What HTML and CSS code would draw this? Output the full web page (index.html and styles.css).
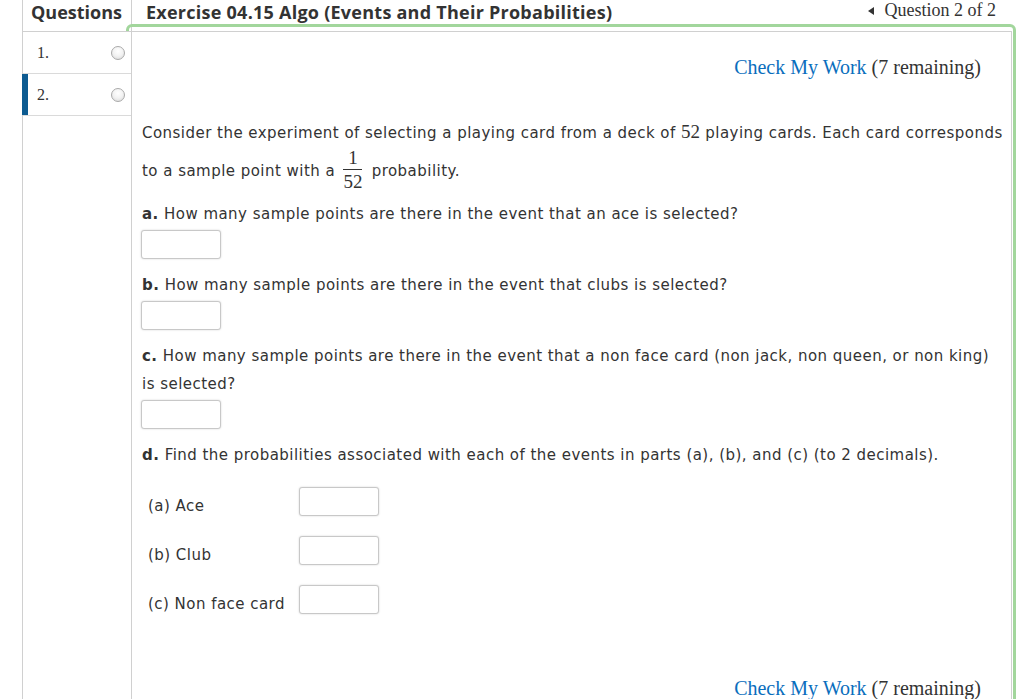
FILE: index.html
```html
<!DOCTYPE html>
<html>
<head>
<meta charset="utf-8">
<link rel="stylesheet" href="styles.css">
</head>
<body>
<div class="app">
  <div class="topbar">
    <div class="qhead">Questions</div>
    <div class="title">Exercise 04.15 Algo (Events and Their Probabilities)</div>
    <div class="qnav"><span class="tri"></span>Question 2 of 2</div>
  </div>
  <div class="focus-ring"></div>
  <div class="main">
    <div class="sidebar">
      <div class="qrow"><span class="num">1.</span><span class="radio"></span></div>
      <div class="qrow active"><span class="num">2.</span><span class="radio"></span></div>
      <div class="filler"></div>
    </div>
    <div class="panel">
      <div class="check"><a class="link">Check My Work</a> (7 remaining)</div>
      <div class="question">
        <p class="intro">Consider the experiment of selecting a playing card from a deck of <span class="math">52</span> playing cards. Each card corresponds</p>
        <p class="intro2">to a sample point with a <span class="frac"><span class="fn">1</span><span class="fd">52</span></span> probability.</p>
        <p class="part"><b>a.</b> How many sample points are there in the event that an ace is selected?</p>
        <div class="field"></div>
        <p class="part"><b>b.</b> How many sample points are there in the event that clubs is selected?</p>
        <div class="field"></div>
        <p class="part"><b>c.</b> How many sample points are there in the event that a non face card (non jack, non queen, or non king)<br>is selected?</p>
        <div class="field"></div>
        <p class="part"><b>d.</b> Find the probabilities associated with each of the events in parts (a), (b), and (c) (to 2 decimals).</p>
        <div class="ptable">
          <div class="prow"><span class="plabel">(a) Ace</span><span class="field small"></span></div>
          <div class="prow"><span class="plabel">(b) Club</span><span class="field small"></span></div>
          <div class="prow"><span class="plabel">(c) Non face card</span><span class="field small"></span></div>
        </div>
      </div>
      <div class="check bottom"><a class="link">Check My Work</a> (7 remaining)</div>
    </div>
  </div>
</div>
</body>
</html>
```
FILE: styles.css
```css
html, body {
  margin: 0;
  padding: 0;
  background: #fff;
  overflow: hidden;
  height: 699px;
}
.app {
  position: relative;
  padding-left: 22px;
  height: 699px;
}
.topbar {
  display: flex;
  align-items: stretch;
  height: 31px;
}
.qhead {
  border-left: 1px solid #d0d0d0;
  border-right: 1px solid #d0d0d0;
  font-family: "Open Sans", sans-serif;
  font-weight: 700;
  font-size: 18px;
  color: #333;
  padding-left: 8px;
  box-sizing: border-box;
  width: 110px;
  line-height: 25px;
}
.title {
  font-family: "Open Sans", sans-serif;
  font-weight: 700;
  font-size: 18px;
  letter-spacing: 0.25px;
  color: #333;
  padding-left: 14px;
  line-height: 25px;
  flex: 1;
}
.qnav {
  font-family: "Liberation Serif", serif;
  font-size: 18px;
  color: #333;
  line-height: 21px;
  padding-right: 28px;
  display: flex;
  align-items: flex-start;
}
.tri {
  display: inline-block;
  width: 0;
  height: 0;
  border-top: 4px solid transparent;
  border-bottom: 4px solid transparent;
  border-right: 6px solid #333;
  margin: 7px 9px 0 0;
  position: relative;
  left: -2px;
}
.focus-ring {
  position: absolute;
  left: 126px;
  top: 24px;
  width: 884px;
  height: 700px;
  border: 3px solid #a2d69c;
  border-radius: 6px;
}
.main {
  display: flex;
  height: 668px;
}
.sidebar {
  position: relative;
  z-index: 1;
  background: #fff;
  width: 110px;
  box-sizing: border-box;
  border-left: 1px solid #d0d0d0;
  border-right: 1px solid #d0d0d0;
  border-top: 1px solid #d0d0d0;
  display: flex;
  flex-direction: column;
}
.qrow {
  height: 41px;
  border-bottom: 1px solid #dadada;
  display: flex;
  align-items: center;
  justify-content: space-between;
  padding: 0 6px 0 14px;
  font-family: "Liberation Serif", serif;
  font-size: 16px;
  color: #333;
  position: relative;
}
.qrow.active::before {
  content: "";
  position: absolute;
  left: -1px;
  top: 0;
  bottom: 0;
  width: 6px;
  background: #0d5b91;
}
.radio {
  width: 12px;
  height: 12px;
  border-radius: 50%;
  border: 1px solid #aaa;
  background: radial-gradient(circle at 50% 35%, #fff 0%, #f2f2f2 50%, #d6d6d6 100%);
}
.panel {
  position: relative;
  flex: 1;
  max-width: 879px;
  border-top: 1px solid #d0d0d0;
  border-right: 1px solid #d0d0d0;
  display: flex;
  flex-direction: column;
  font-family: "DejaVu Sans", Verdana, sans-serif;
  font-size: 15px;
  letter-spacing: 0.47px;
  color: #333;
}
.check {
  font-family: "Liberation Serif", serif;
  font-size: 20px;
  letter-spacing: 0;
  color: #333;
  text-align: right;
  padding-right: 30px;
  margin-top: 24px;
  line-height: 22px;
}
.check.bottom {
  margin-top: auto;
}
.link {
  color: #0a6ebd;
}
.question {
  padding-left: 10px;
}
p {
  margin: 0;
}
.intro {
  margin-top: 44px;
  line-height: 20px;
  white-space: nowrap;
}
.math {
  font-family: "Liberation Serif", serif;
  font-size: 19px;
  letter-spacing: 0;
}
.intro2 {
  margin-top: 6px;
  line-height: 44px;
}
.frac {
  display: inline-flex;
  flex-direction: column;
  align-items: center;
  vertical-align: middle;
  font-family: "Liberation Serif", serif;
  font-size: 19px;
  letter-spacing: 0;
  line-height: 21px;
  margin: 0 4px 0 3px;
  position: relative;
  top: -2px;
}
.fn {
  border-bottom: 1px solid #333;
  padding: 0 3px 1px;
  align-self: stretch;
  text-align: center;
}
.fd {
  padding-top: 1px;
}
.part {
  line-height: 28px;
  margin-top: 0;
}
.intro2 + .part {
  margin-top: 6px;
}
.field {
  display: block;
  width: 80px;
  height: 29px;
  border: 1px solid #c8c8c8;
  border-radius: 3px;
  box-shadow: 0 0 2px rgba(0,0,0,0.18);
  margin: 2px 0 12px -1px;
  box-sizing: border-box;
  background: #fff;
}
.ptable {
  display: flex;
  flex-direction: column;
  gap: 20px;
  margin-top: 18px;
  padding-left: 6px;
}
.prow {
  display: flex;
  align-items: center;
}
.plabel {
  width: 151px;
  padding-top: 9px;
}
.field.small {
  margin: 0;
  height: 29px;
}
```
